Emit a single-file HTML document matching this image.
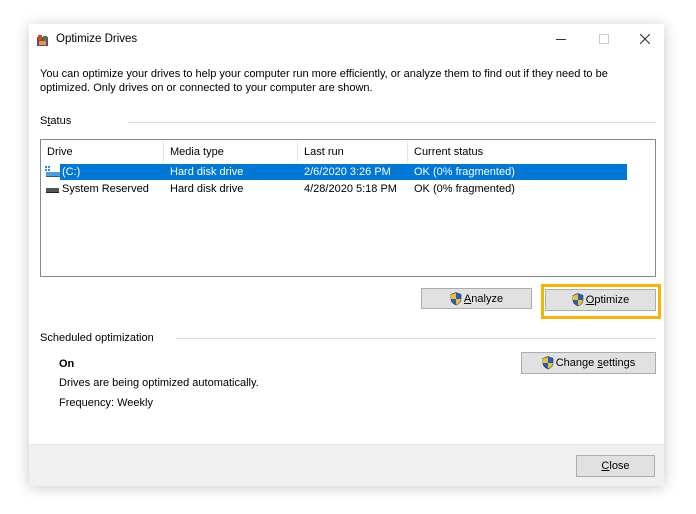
<!DOCTYPE html><html><head><style>
body{margin:0;width:696px;height:514px;background:#fff;position:relative;overflow:hidden;font-family:"Liberation Sans",sans-serif;font-size:11px;color:#000}
.a{position:absolute;white-space:nowrap}
.win{position:absolute;left:29px;top:24px;width:635px;height:461px;background:#fff;box-shadow:0 2px 14px rgba(0,0,0,.22)}
.btn{position:absolute;background:#e1e1e1;border:1px solid #adadad;box-sizing:border-box;text-align:center;font-size:11px;display:flex;align-items:center;justify-content:center;gap:2px}
.hl{height:1px;background:#dcdcdc;position:absolute}
u{text-decoration:underline}
</style></head><body>
<div class="win"></div>
<svg class="a" style="left:36px;top:34px" width="13" height="13" viewBox="0 0 13 13"><rect x="1" y="3" width="11" height="9" fill="#7a3a8c"/><rect x="2" y="1" width="4" height="5" fill="#d04a2a"/><rect x="7" y="2" width="4" height="5" fill="#3a8a3a"/><rect x="3" y="7" width="7" height="4" fill="#e0a020"/></svg>
<div class="a" style="left:56px;top:33px;font-size:11.5px">Optimize Drives</div>
<div class="a" style="left:556px;top:39px;width:10px;height:1px;background:#333"></div>
<div class="a" style="left:599px;top:34px;width:8px;height:8px;border:1px solid #ccc"></div>
<svg class="a" style="left:640px;top:34px" width="10" height="10"><path d="M0 0L10 10M10 0L0 10" stroke="#333" stroke-width="1.1"/></svg>
<div class="a" style="left:40px;top:67px;line-height:14px">You can optimize your drives to help your computer run more efficiently, or analyze them to find out if they need to be<br>optimized. Only drives on or connected to your computer are shown.</div>
<div class="a" style="left:40px;top:115px">S<u>t</u>atus</div>
<div class="hl" style="left:128px;top:122px;width:528px"></div>
<div class="a" style="left:40px;top:139px;width:616px;height:138px;border:1px solid #828790;box-sizing:border-box"></div>
<div class="a" style="left:163px;top:141px;width:1px;height:22px;background:#e5e5e5"></div>
<div class="a" style="left:297px;top:141px;width:1px;height:22px;background:#e5e5e5"></div>
<div class="a" style="left:407px;top:141px;width:1px;height:22px;background:#e5e5e5"></div>
<div class="a" style="left:47px;top:146px">Drive</div>
<div class="a" style="left:170px;top:146px">Media type</div>
<div class="a" style="left:304px;top:146px">Last run</div>
<div class="a" style="left:414px;top:146px">Current status</div>
<div class="a" style="left:60px;top:164px;width:567px;height:16px;background:#0078d7"></div>
<svg class="a" style="left:45px;top:165px" width="15" height="13"><rect x="0" y="1" width="2" height="2" fill="#1e90ff"/><rect x="3" y="1" width="2" height="2" fill="#1e90ff"/><rect x="0" y="4" width="2" height="2" fill="#1e90ff"/><rect x="3" y="4" width="2" height="2" fill="#1e90ff"/><rect x="1" y="7" width="14" height="5" fill="#4aa0e0"/><rect x="1" y="11" width="14" height="1" fill="#2a5a8a"/></svg>
<div class="a" style="left:62px;top:166px;color:#fff">(C:)</div>
<div class="a" style="left:170px;top:166px;color:#fff">Hard disk drive</div>
<div class="a" style="left:304px;top:166px;color:#fff">2/6/2020 3:26 PM</div>
<div class="a" style="left:414px;top:166px;color:#fff">OK (0% fragmented)</div>
<svg class="a" style="left:46px;top:185px" width="14" height="10"><rect x="0" y="3" width="13" height="5" fill="#555"/><rect x="0" y="7" width="13" height="1" fill="#222"/></svg>
<div class="a" style="left:62px;top:183px">System Reserved</div>
<div class="a" style="left:170px;top:183px">Hard disk drive</div>
<div class="a" style="left:304px;top:183px">4/28/2020 5:18 PM</div>
<div class="a" style="left:414px;top:183px">OK (0% fragmented)</div>
<svg width="0" height="0" style="position:absolute"><defs><g id="sh"><path d="M6 0.5L11 2.5V7C11 10 8.5 12 6 13C3.5 12 1 10 1 7V2.5Z" fill="#2060c0" stroke="#334" stroke-width=".6"/><path d="M6 1L6 7H1V2.8Z" fill="#f0c030"/><path d="M6 7H10.8C10.6 10 8.4 12 6 12.6Z" fill="#f0c030"/></g></defs></svg>
<div class="btn" style="left:421px;top:288px;width:111px;height:21px"><svg width="12" height="14"><use href="#sh"/></svg><span><u>A</u>nalyze</span></div>
<div class="a" style="left:541px;top:284px;width:120px;height:35px;border:3px solid #f5b400;box-sizing:border-box"></div>
<div class="btn" style="left:545px;top:289px;width:111px;height:22px"><svg width="12" height="14"><use href="#sh"/></svg><span><u>O</u>ptimize</span></div>
<div class="a" style="left:40px;top:332px">Scheduled optimization</div>
<div class="hl" style="left:176px;top:338px;width:480px"></div>
<div class="btn" style="left:521px;top:352px;width:135px;height:22px"><svg width="12" height="14"><use href="#sh"/></svg><span>Change <u>s</u>ettings</span></div>
<div class="a" style="left:59px;top:358px;font-weight:bold">On</div>
<div class="a" style="left:59px;top:377px">Drives are being optimized automatically.</div>
<div class="a" style="left:59px;top:397px">Frequency: Weekly</div>
<div class="a" style="left:29px;top:444px;width:635px;height:41px;background:#f0f0f0;border-top:1px solid #e6e6e6"></div>
<div class="btn" style="left:576px;top:455px;width:79px;height:22px"><span><u>C</u>lose</span></div>
</body></html>
